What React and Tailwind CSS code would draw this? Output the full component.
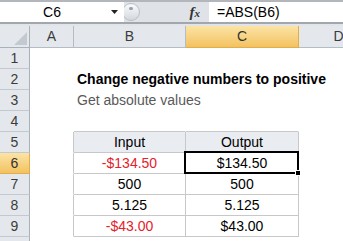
const FONT = { fontFamily: '"Liberation Sans", Arial, sans-serif' };

const COLS = [
  { key: "A", w: "w-[44px]" },
  { key: "B", w: "w-[112px]" },
  { key: "C", w: "w-[113px]", sel: true },
  { key: "D", w: "w-[80px]" },
];

const CELLS = {
  "5B": { v: "Input", head: true },
  "5C": { v: "Output", head: true },
  "6B": { v: "-$134.50", red: true },
  "6C": { v: "$134.50", active: true },
  "7B": { v: "500" },
  "7C": { v: "500" },
  "8B": { v: "5.125" },
  "8C": { v: "5.125" },
  "9B": { v: "-$43.00", red: true },
  "9C": { v: "$43.00" },
};

const inTable = (r, c) => r >= 5 && r <= 9 && (c === "B" || c === "C");

function Cell({ r, col }) {
  const c = col.key;
  const cell = CELLS[`${r}${c}`];
  const right = inTable(r, c) || (r >= 5 && r <= 9 && c === "A");
  const bottom = inTable(r, c) || (r === 4 && (c === "B" || c === "C"));
  return (
    <div
      className={`${col.w} h-[21px] shrink-0 border-r border-b relative flex items-center ${
        right ? "border-r-[#c8c8c8]" : "border-r-white"
      } ${bottom ? "border-b-[#c8c8c8]" : "border-b-white"} ${
        cell && cell.head ? "bg-[#e9ecf0]" : "bg-white"
      }`}
    >
      {r === 2 && c === "B" && (
        <span className="absolute z-10 left-[3px] whitespace-nowrap font-bold text-[14px] text-black">
          Change negative numbers to positive
        </span>
      )}
      {r === 3 && c === "B" && (
        <span className="absolute z-10 left-[3px] whitespace-nowrap text-[14px] text-[#595959]">
          Get absolute values
        </span>
      )}
      {cell && (
        <span
          className={`w-full text-center text-[14px] ${
            cell.red ? "text-[#e3222b]" : "text-black"
          }`}
        >
          {cell.v}
        </span>
      )}
      {cell && cell.active && (
        <div className="absolute z-10 left-[-2px] top-[-2px] right-[-1px] bottom-[-1px] border-2 border-black">
          <div className="absolute right-[-4px] bottom-[-4px] w-[6px] h-[6px] bg-black border border-white" />
        </div>
      )}
    </div>
  );
}

export default function App() {
  const rows = [1, 2, 3, 4, 5, 6, 7, 8, 9, 10];
  return (
    <div className="w-[343px] h-[241px] overflow-hidden bg-white" style={FONT}>
      {/* formula bar */}
      <div className="h-[2px] bg-[#b3b7bc]" />
      <div className="h-[20px] flex bg-[#dfe3e8]">
        <div className="w-[104px] bg-white flex items-center justify-center text-[14px] text-black">
          C6
        </div>
        <div className="w-[20px] bg-white flex items-center justify-center">
          <svg width="7" height="4" viewBox="0 0 7 4">
            <polygon points="0,0 7,0 3.5,4" fill="#222" />
          </svg>
        </div>
        <div className="w-[18px] relative overflow-hidden">
          <div className="absolute left-[-2px] top-[1px] w-[18px] h-[18px] rounded-full bg-linear-to-b from-[#fafbfc] to-[#d3d8de] border border-[#b9bfc6]">
            <div className="absolute left-[6px] top-[3px] w-[4px] h-[3px] rounded-full bg-[#9aa1a9]" />
          </div>
        </div>
        <div className="w-[67px] flex items-center justify-end pr-[9px]">
          <span
            className="italic font-bold text-[15px] text-[#333] leading-none"
            style={{ fontFamily: '"Liberation Serif", "Times New Roman", serif' }}
          >
            f<span className="text-[11px]">x</span>
          </span>
        </div>
        <div className="flex-1 bg-white flex items-center pl-[8px] text-[14px] text-black">
          =ABS(B6)
        </div>
      </div>
      <div className="h-[2px] bg-[#a2a7ad]" />
      <div className="h-[2px] bg-[#e1e4e8]" />

      {/* column headers */}
      <div className="flex h-[22px]">
        <div className="w-[30px] shrink-0 bg-[#e4e8ed] border-r border-b border-[#a9b1bb] relative">
          <svg className="absolute right-[2px] bottom-[2px]" width="13" height="13" viewBox="0 0 13 13">
            <polygon points="13,0 13,13 0,13" fill="#c3c9d0" />
          </svg>
        </div>
        {COLS.map((col) => (
          <div
            key={col.key}
            className={`${col.w} shrink-0 border-r border-b flex items-center justify-center text-[14px] ${
              col.sel
                ? "bg-linear-to-b from-[#fbe4a4] to-[#f3c25f] border-[#e2ad4c] text-[#333]"
                : "bg-[#e4e8ed] border-[#b4bcc6] text-[#3b3b3b]"
            }`}
          >
            {col.key}
          </div>
        ))}
      </div>

      {/* rows */}
      {rows.map((r) => (
        <div key={r} className="flex">
          <div
            className={`w-[30px] h-[21px] shrink-0 border-r border-b flex items-center justify-center text-[14px] ${
              r === 6
                ? "bg-linear-to-b from-[#fbe4a4] to-[#f3c25f] border-b-[#e2ad4c] border-r-[#e2ad4c] text-[#333]"
                : "bg-[#e4e8ed] border-b-[#c2c9d1] border-r-[#a9b1bb] text-[#3b3b3b]"
            }`}
          >
            {r < 10 ? r : ""}
          </div>
          {COLS.map((col) => (
            <Cell key={col.key} r={r} col={col} />
          ))}
        </div>
      ))}
    </div>
  );
}
